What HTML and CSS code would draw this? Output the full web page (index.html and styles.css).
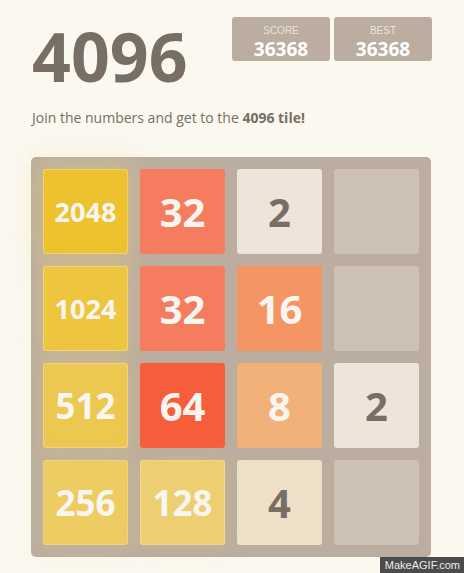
FILE: index.html
```html
<!DOCTYPE html>
<html>
  <head>
    <meta charset="utf-8">
    <link rel="stylesheet" href="styles.css">
  </head>
  <body>
    <div class="container">
      <div class="heading">
        <h1 class="title">4096</h1>
        <div class="scores">
          <div class="scores__box">
            <div class="scores__label">score</div>
            <div class="scores__value">36368</div>
          </div>
          <div class="scores__box">
            <div class="scores__label">best</div>
            <div class="scores__value">36368</div>
          </div>
        </div>
      </div>
      <p class="intro">Join the numbers and get to the <strong>4096 tile!</strong></p>
      <div class="board">
        <div class="tile tile--2048">2048</div>
        <div class="tile tile--32">32</div>
        <div class="tile tile--2">2</div>
        <div class="tile"></div>

        <div class="tile tile--1024">1024</div>
        <div class="tile tile--32">32</div>
        <div class="tile tile--16">16</div>
        <div class="tile"></div>

        <div class="tile tile--512">512</div>
        <div class="tile tile--64">64</div>
        <div class="tile tile--8">8</div>
        <div class="tile tile--2">2</div>

        <div class="tile tile--256">256</div>
        <div class="tile tile--128">128</div>
        <div class="tile tile--4">4</div>
        <div class="tile"></div>
      </div>
    </div>
    <div class="watermark">MakeAGIF.com</div>
  </body>
</html>
```

FILE: styles.css
```css
html, body {
  margin: 0;
  padding: 0;
}
body {
  background: #faf8ef;
  color: #776e65;
  font-family: "Open Sans", "DejaVu Sans", sans-serif;
  height: 573px;
  overflow: hidden;
}
.container {
  width: 400px;
  margin: 0 0 0 31px;
  padding-top: 17px;
}

.heading {
  display: flex;
  justify-content: space-between;
  align-items: flex-start;
}
.title {
  margin: 5px 0 0 1px;
  font-size: 68px;
  line-height: 1;
  font-weight: 700;
  color: #776e65;
}

.scores {
  display: flex;
  gap: 4px;
  margin-right: -1px;
}
.scores__box {
  width: 98px;
  height: 44px;
  box-sizing: border-box;
  padding-top: 8px;
  background: #bbada0;
  border-radius: 3px;
  text-align: center;
}
.scores__label {
  text-transform: uppercase;
  font-family: "Liberation Sans", Arial, sans-serif;
  font-size: 10px;
  line-height: 12px;
  color: #eee4da;
}
.scores__value {
  margin-top: 3px;
  font-size: 19px;
  line-height: 18px;
  font-weight: 700;
  color: #fff;
}

.intro {
  margin: 18px 0 0 1px;
  font-size: 14px;
  line-height: 20px;
}
.intro strong {
  font-weight: 700;
}

.board {
  margin-top: 29px;
  display: grid;
  grid-template-columns: repeat(4, 85px);
  grid-auto-rows: 85px;
  gap: 12px;
  padding: 12px;
  background: #bbada0;
  border-radius: 5px;
}
.tile {
  display: flex;
  align-items: center;
  justify-content: center;
  border-radius: 3px;
  background: #cdc1b4;
  font-weight: 700;
  font-size: 40px;
  color: #f9f6f2;
}

.tile--2 { background: #eee4da; color: #776e65; }
.tile--4 { background: #ede0c8; color: #776e65; }
.tile--8 { background: #f2b179; }
.tile--16 { background: #f59563; }
.tile--32 { background: #f67c5f; }
.tile--64 { background: #f65e3b; }

.tile--128,
.tile--256,
.tile--512 {
  font-size: 35px;
}
.tile--1024,
.tile--2048 {
  font-size: 27px;
}
.tile--128 {
  background: #edcf72;
  box-shadow: 0 0 20px 6px rgba(243, 215, 116, .12), inset 0 0 0 1px rgba(255, 255, 255, .2);
}
.tile--256 {
  background: #edcc61;
  box-shadow: 0 0 20px 6px rgba(243, 215, 116, .16), inset 0 0 0 1px rgba(255, 255, 255, .2);
}
.tile--512 {
  background: #edc850;
  box-shadow: 0 0 20px 6px rgba(243, 215, 116, .2), inset 0 0 0 1px rgba(255, 255, 255, .25);
}
.tile--1024 {
  background: #edc53f;
  box-shadow: 0 0 20px 6px rgba(243, 215, 116, .24), inset 0 0 0 1px rgba(255, 255, 255, .3);
}
.tile--2048 {
  background: #edc22e;
  box-shadow: 0 0 24px 8px rgba(243, 215, 116, .3), inset 0 0 0 1px rgba(255, 255, 255, .3);
}

/* gif export stamp in the corner */
.watermark {
  position: absolute;
  right: 0;
  bottom: 0;
  padding: 0 4px 0 5px;
  background: #4b4b4b;
  color: #ececec;
  font-family: "Liberation Sans", Arial, sans-serif;
  font-size: 11px;
  line-height: 16px;
}
```
